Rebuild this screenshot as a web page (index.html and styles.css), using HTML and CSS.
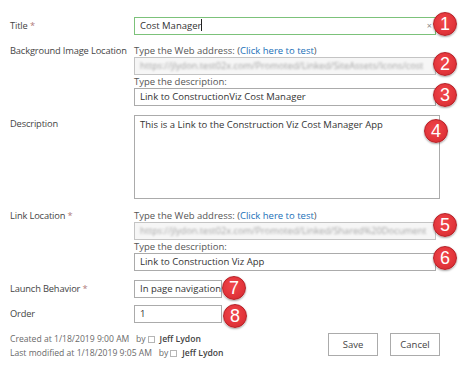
FILE: index.html
```html
<!DOCTYPE html>
<html>
<head>
<meta charset="utf-8">
<link rel="stylesheet" href="styles.css">
</head>
<body>
<div class="form">
  <div class="row r1">
    <div class="label">Title <span class="req">*</span></div>
    <div class="field">
      <div class="box input focus">Cost Manager<span class="caret"></span><span class="clear">×</span><span class="badge b1">1</span></div>
    </div>
  </div>
  <div class="row r2">
    <div class="label lh">Background Image Location</div>
    <div class="field">
      <div class="hint">Type the Web address: (<span class="link">Click here to test</span>)</div>
      <div class="box input url"><span class="blur">https://jlydon.test02x.com/Promoted/Linked/SiteAssets/Icons/cost</span><span class="badge b2">2</span></div>
      <div class="hint h2">Type the description:</div>
      <div class="box input">Link to ConstructionViz Cost Manager<span class="badge b3">3</span></div>
    </div>
  </div>
  <div class="row r3">
    <div class="label">Description</div>
    <div class="field">
      <div class="box textarea">This is a Link to the Construction Viz Cost Manager App<span class="badge b4">4</span></div>
    </div>
  </div>
  <div class="row r4">
    <div class="label lh">Link Location <span class="req">*</span></div>
    <div class="field">
      <div class="hint">Type the Web address: (<span class="link">Click here to test</span>)</div>
      <div class="box input url"><span class="blur">https://jlydon.test02x.com/Promoted/Linked/Shared%20Document</span><span class="badge b5">5</span></div>
      <div class="hint h2">Type the description:</div>
      <div class="box input">Link to Construction Viz App<span class="badge b6">6</span></div>
    </div>
  </div>
  <div class="row r5">
    <div class="label">Launch Behavior <span class="req">*</span></div>
    <div class="field">
      <div class="box input small">In page navigation<span class="badge b7">7</span></div>
    </div>
  </div>
  <div class="row r6">
    <div class="label">Order</div>
    <div class="field">
      <div class="box input small">1<span class="badge b8">8</span></div>
    </div>
  </div>
  <div class="footer">
    <div class="meta">
      <div>Created at 1/18/2019 9:00 AM&nbsp;&nbsp; by<span class="pres"></span><b>Jeff Lydon</b></div>
      <div>Last modified at 1/18/2019 9:05 AM&nbsp;&nbsp; by<span class="pres"></span><b>Jeff Lydon</b></div>
    </div>
    <div class="buttons">
      <button class="btn">Save</button>
      <button class="btn">Cancel</button>
    </div>
  </div>
</div>
</body>
</html>
```

FILE: styles.css
```css
body {
  margin: 0;
  background: #fff;
  font-family: "Open Sans", "Noto Sans", sans-serif;
  font-size: 9.5px;
  color: #444;
}
.form {
  width: 430px;
  padding: 17px 0 0 10px;
}
.row {
  display: flex;
}
.label {
  width: 124px;
  flex: none;
  white-space: nowrap;
  font-size: 9.3px;
  letter-spacing: -0.15px;
  line-height: 16px;
  padding-top: 1px;
  color: #444;
}
.label.lh {
  line-height: 12px;
  padding-top: 0;
}
.req {
  color: #b07a7a;
}
.field {
  width: 302px;
}
.box {
  position: relative;
  box-sizing: border-box;
  border: 1px solid #ababab;
  background: #fff;
  color: #333;
}
.input {
  height: 18px;
  line-height: 16px;
  padding: 0 5px;
  white-space: nowrap;
}
.focus {
  border-color: #7cc27a;
}
.caret {
  display: inline-block;
  width: 1px;
  height: 12px;
  background: #222;
  vertical-align: -2px;
}
.clear {
  position: absolute;
  right: 3px;
  top: 0;
  color: #888;
  font-size: 9px;
}
.url {
  background: #f6f6f6;
  border-color: #c4c4c4;
}
.blur {
  display: block;
  width: 292px;
  overflow: hidden;
  font-size: 9.2px;
  color: #a4a4a4;
  filter: blur(1.1px);
}
.hint {
  line-height: 12px;
  color: #555;
}
.h2 {
  margin-top: 1px;
}
.link {
  color: #1a6fb8;
}
.textarea {
  width: 306px;
  height: 84px;
  padding: 2px 5px;
  line-height: 14px;
}
.small {
  width: 88px;
}
.r2 { margin-top: 10px; }
.r3 { margin-top: 9px; }
.r4 { margin-top: 11px; }
.r5 { margin-top: 9px; }
.r6 { margin-top: 7px; }
.badge {
  position: absolute;
  width: 24px;
  height: 24px;
  box-sizing: border-box;
  border-radius: 50%;
  background: radial-gradient(circle at 45% 40%, #f0474b 0%, #e2343a 60%, #c8262c 100%);
  border: 1px solid #b52127;
  box-shadow: 0 1px 2px rgba(0,0,0,0.35);
  color: #fff;
  font-family: "Liberation Sans", Arial, sans-serif;
  font-size: 18px;
  line-height: 22px;
  letter-spacing: 0;
  text-align: center;
  top: 50%;
  left: calc(100% - 2px);
  transform: translateY(-50%);
}
.b1 { margin-top: -2px; }
.b2 { margin-top: -2px; }
.b3 { margin-top: -2px; }
.b4 { top: 3px; left: auto; right: -9px; transform: none; }
.b5 { margin-top: -6px; }
.b6 { margin-top: -4px; }
.b7 { left: calc(100% + 1px); margin-top: -1px; }
.b8 { left: calc(100% + 2px); margin-top: 2px; }
.footer {
  display: flex;
  justify-content: space-between;
  align-items: flex-start;
  margin-top: 9px;
}
.meta {
  line-height: 14px;
  color: #6a6a6a;
  font-size: 8.6px;
}
.meta b {
  color: #444;
  font-weight: 600;
}
.pres {
  display: inline-block;
  width: 7px;
  height: 7px;
  box-sizing: border-box;
  border: 1px solid #b5b5b5;
  margin: 0 5px 0 2px;
  vertical-align: -1px;
}
.buttons {
  display: flex;
  gap: 12px;
  margin-top: 1px;
}
.btn {
  width: 50px;
  height: 23px;
  border: 1px solid #ababab;
  background: #fff;
  font-family: "Open Sans", "Noto Sans", sans-serif;
  font-size: 9.5px;
  color: #444;
  padding: 0;
}
```
